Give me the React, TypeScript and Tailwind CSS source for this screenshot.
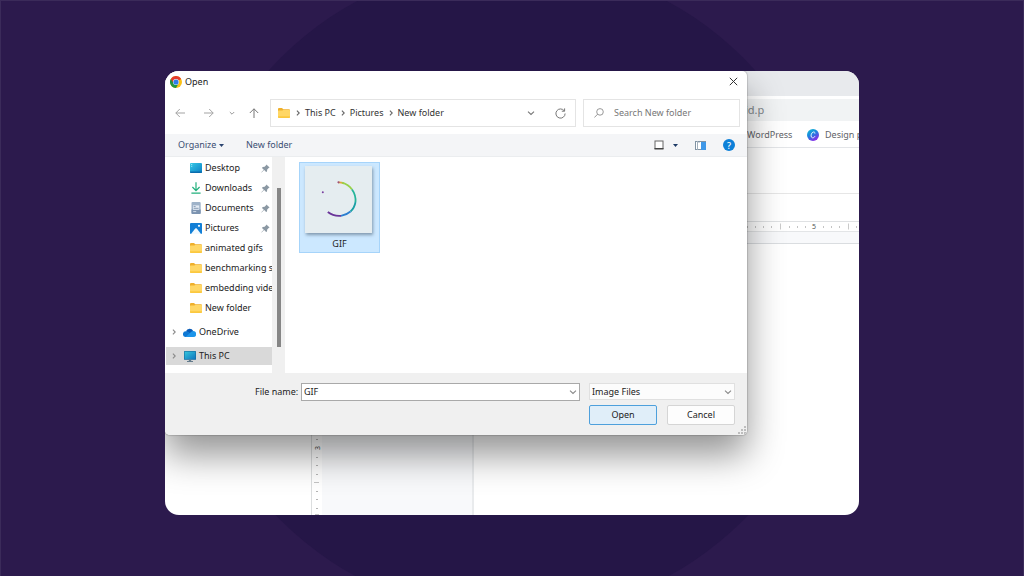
import type { ReactNode } from 'react';

function FolderIcon() {
  return (
    <svg viewBox="0 0 12 10" className="h-[10px] w-3 shrink-0" aria-hidden="true">
      <path d="M0 1Q0 0 1 0h3l1.3 1.3H11q1 0 1 1V5H0z" fill="#efb02c" />
      <path d="M0 3.2Q0 2.6.6 2.6h3.6L5.4 1.9H11.4q.6 0 .6.6V9q0 1-1 1H1Q0 10 0 9z" fill="#ffd766" />
      <path d="M0 8.2h12V9q0 1-1 1H1Q0 10 0 9z" fill="#fbc83f" />
    </svg>
  );
}

function DesktopIcon() {
  return (
    <svg viewBox="0 0 12 10" className="h-[10px] w-3 shrink-0" aria-hidden="true">
      <defs>
        <linearGradient id="desk" x1="0" y1="0" x2="1" y2="1">
          <stop offset="0" stopColor="#35c9e6" />
          <stop offset="1" stopColor="#0b7fc4" />
        </linearGradient>
      </defs>
      <rect width="12" height="10" rx="1" fill="url(#desk)" />
      <path d="M1.2 1.5h1M1.2 3.3h1" stroke="#b8f2ff" strokeWidth=".9" />
      <path d="M0 8.6h12V9q0 1-1 1H1Q0 10 0 9z" fill="#0a6cad" />
    </svg>
  );
}

function DownloadIcon() {
  return (
    <svg viewBox="0 0 12 12" className="size-3 shrink-0" fill="none" stroke="#22b07d" strokeWidth="1.2" aria-hidden="true">
      <path d="M6 .3v8M2.4 5 6 8.6 9.6 5" />
      <path d="M1.4 11.2h9.2" stroke="#22b07d" strokeWidth="1.3" />
    </svg>
  );
}

function DocumentIcon() {
  return (
    <svg viewBox="0 0 12 12" className="size-3 shrink-0" aria-hidden="true">
      <rect x="1.5" width="9.2" height="12" rx="1" fill="#9fb3c9" />
      <path d="M1.5 7.5h9.2V11q0 1-1 1H2.5q-1 0-1-1z" fill="#7c93b0" />
      <rect x="3" y="3.4" width="6.2" height="4.4" fill="#e4ecf5" />
      <path d="M3.6 4.6h2M3.6 6.3h5" stroke="#7088a5" strokeWidth=".8" />
      <path d="M3.200 9.600h3" stroke="#e4ecf5" strokeWidth=".8" />
    </svg>
  );
}

function PicturesIcon() {
  return (
    <svg viewBox="0 0 12 11" className="h-[11px] w-3 shrink-0" aria-hidden="true">
      <rect width="12" height="11" rx="1" fill="#127fd6" />
      <path d="M1 11 5.2 5.6q.8-.8 1.6 0L11 11z" fill="#f2faff" />
      <circle cx="9" cy="2.8" r="1.1" fill="#f2faff" />
    </svg>
  );
}

function CloudIcon() {
  return (
    <svg viewBox="0 0 13 9" className="h-[9px] w-[13px] shrink-0" aria-hidden="true">
      <path d="M3 3.3A3.9 3.9 0 0 1 10.2 3L8.5 7z" fill="#0a5cb8" />
      <path d="M2.7 9A2.7 2.7 0 0 1 3 3.2q1.2-.2 2.4.7L11 8z" fill="#0f78d4" />
      <path d="M2.7 9 8 4q1-.9 2.2-.9A2.9 2.9 0 0 1 10.3 9z" fill="#1d95ea" />
    </svg>
  );
}

function MonitorIcon() {
  return (
    <svg viewBox="0 0 12 11" className="h-[11px] w-3 shrink-0" aria-hidden="true">
      <defs>
        <linearGradient id="screen" x1="0" y1="0" x2="1" y2="1">
          <stop offset="0" stopColor="#35c7dc" />
          <stop offset="1" stopColor="#0f75be" />
        </linearGradient>
      </defs>
      <rect width="12" height="8.8" rx=".6" fill="#176a9d" />
      <rect x=".6" y=".6" width="10.8" height="7.6" fill="url(#screen)" />
      <path d="M4.8 8.8h2.4v1.3H9V11H3v-.9h1.8z" fill="#637b8c" />
    </svg>
  );
}

function PinIcon() {
  return (
    <svg viewBox="0 0 9 9" className="size-[9px] shrink-0" aria-hidden="true">
      <path d="M5.4.4 8.6 3.6 7.7 4 6.2 5.5 6 7.4 5.1 8 3.2 6.1.6 8.6.3 8.3 2.8 5.7 1 3.9 1.7 3l1.9-.2L5.1 1.3z" fill="#8b98a3" />
    </svg>
  );
}

function ChromeIcon() {
  return (
    <svg viewBox="0 0 48 48" className="size-3 shrink-0" aria-hidden="true">
      <circle cx="24" cy="24" r="24" fill="#fbc116" />
      <path d="M24 24 3.2 12A24 24 0 0 1 44.8 12z" fill="#e33b2e" />
      <path d="M24 24 3.2 12A24 24 0 0 0 24 48l10.4-18z" fill="#229342" />
      <path d="M3.2 12h41.6L24 13 14.5 29.5z" fill="#e33b2e" />
      <circle cx="24" cy="24" r="12" fill="#fff" />
      <circle cx="24" cy="24" r="10.4" fill="#2f7de9" />
    </svg>
  );
}

function Chevron({ dir, tone }: { dir: 'right' | 'down'; tone: string }) {
  return (
    <svg viewBox="0 0 8 8" className={`size-2 shrink-0 ${tone}`} fill="none" stroke="currentColor" strokeWidth="1.1" aria-hidden="true">
      <path d={dir === 'right' ? 'M2.900 1.700 5.200 4 2.900 6.300' : 'M1 2.700 4 5.500 7 2.700'} />
    </svg>
  );
}

function Arrow({ d, tone }: { d: string; tone: string }) {
  return (
    <svg viewBox="0 0 10 10" className={`size-[10px] ${tone}`} fill="none" stroke="currentColor" strokeWidth="1" aria-hidden="true">
      <path d={d} />
    </svg>
  );
}

const places: { name: string; icon: ReactNode; pinned?: boolean }[] = [
  { name: 'Desktop', icon: <DesktopIcon />, pinned: true },
  { name: 'Downloads', icon: <DownloadIcon />, pinned: true },
  { name: 'Documents', icon: <DocumentIcon />, pinned: true },
  { name: 'Pictures', icon: <PicturesIcon />, pinned: true },
  { name: 'animated gifs', icon: <FolderIcon /> },
  { name: 'benchmarking sc', icon: <FolderIcon /> },
  { name: 'embedding vide', icon: <FolderIcon /> },
  { name: 'New folder', icon: <FolderIcon /> },
];

function HorizontalRuler() {
  const dots = [1, 9, 17, 25, 43, 51, 59, 77, 85, 93, 110];
  return (
    <svg viewBox="0 0 112 9" className="h-[9px] w-[112px]" aria-hidden="true">
      {dots.map((x) => (
        <rect key={x} x={x - 1} y="4" width="1" height="2" fill="#c4c4c4" />
      ))}
      <path d="M33.5 1.500v6M101.500 1.500v6" stroke="#cacaca" />
      <text x="67" y="7" fontSize="7" textAnchor="middle" fill="#555">5</text>
    </svg>
  );
}

function VerticalRuler() {
  const dots = [4, 22, 30, 39, 56, 64, 73];
  return (
    <svg viewBox="0 0 9 80" className="h-20 w-[9px]" aria-hidden="true">
      {dots.map((y) => (
        <rect key={y} x="4" y={y} width="2" height="1" fill="#b5b5b5" />
      ))}
      <path d="M2 47.5h5M3 79.500h4" stroke="#c4c4c4" />
      <text transform="translate(8 13) rotate(-90)" fontSize="7" textAnchor="middle" fill="#444">3</text>
    </svg>
  );
}

function EditorPage() {
  return (
    <div className="col-start-1 row-start-1 flex min-w-0 flex-col bg-white text-[#5f6368]">
      <div className="h-[25px] bg-[#e8eaed]" />
      <div className="mt-[3px] flex h-[22px] items-center justify-end bg-[#f1f3f4]">
        <span className="w-[114px] text-[11px] text-[#80868b]">id.p</span>
      </div>
      <div className="flex h-[27px] items-center justify-end overflow-hidden border-b border-[#e3e5e8] pt-[1px]">
        <div className="flex w-[112px] shrink-0 items-center whitespace-nowrap">
          <a href="#wordpress" className="w-[60px] shrink-0">WordPress</a>
          <a href="#design" className="flex shrink-0 items-center gap-[6px]">
            <svg viewBox="0 0 12 12" className="size-3 shrink-0" aria-hidden="true">
              <defs>
                <linearGradient id="brand" x1="0" y1="0" x2=".6" y2="1">
                  <stop offset="0" stopColor="#10c4cf" />
                  <stop offset=".5" stopColor="#1b83df" />
                  <stop offset="1" stopColor="#8a2be8" />
                </linearGradient>
              </defs>
              <circle cx="6" cy="6" r="6" fill="url(#brand)" />
              <path d="M7.900 4.600C8.300 3 6.600 2.300 5.200 3.700 3.600 5.400 3.700 8.600 5.500 8.800 6.600 8.900 7.500 8.100 8 7.200" fill="none" stroke="#fff" strokeWidth=".9" />
            </svg>
            Design p
          </a>
        </div>
      </div>
      <div className="h-[46px] border-b border-[#e6e6e6]" />
      <div className="h-[28px] border-b border-[#dfe1e3]" />
      <div className="flex h-[10px] justify-end border-b border-[#e3e5e7]">
        <HorizontalRuler />
      </div>
      <div className="h-3 border-b border-[#dadde0] bg-[#f8f9fb]" />
      <div className="flex flex-1">
        <div className="w-[147px] border-r border-[#dcdedf]" />
        <div className="flex w-[10px] items-end">
          <VerticalRuler />
        </div>
        <div className="w-[152px] border-r-2 border-[#e9ebed] bg-[#f8f9fb]" />
        <div className="flex-1" />
      </div>
    </div>
  );
}

function AddressRow() {
  return (
    <div className="flex items-center pt-[7px] pr-[7px] pb-[7px] pl-[10px]">
      <div className="flex w-[95px] shrink-0 items-center text-[#9a9a9a]">
        <button aria-label="Back" className="w-[28px]"><Arrow d="M10 5H.8M4.800 1 .8 5l4 4" tone="text-[#a3a3a3]" /></button>
        <button aria-label="Forward" className="w-[26px] pl-[1px]"><Arrow d="M0 5h9.200M5.200 1l4 4-4 4" tone="text-[#a3a3a3]" /></button>
        <button aria-label="Recent locations" className="flex w-[20px]">
          <svg viewBox="0 0 6 6" className="size-[6px]" fill="none" stroke="currentColor" aria-hidden="true"><path d="M.8 2 3 4.200 5.200 2" /></svg>
        </button>
        <button aria-label="Up"><Arrow d="M5 10V.8M.8 5 5 .8 9.200 5" tone="text-[#777]" /></button>
      </div>
      <div className="flex h-[28px] flex-1 items-center border border-[#e4e4e4] pr-[9px] pl-[7px] text-[#333]">
        <FolderIcon />
        <nav aria-label="Location" className="flex flex-1 items-center pl-[4px]">
          <Chevron dir="right" tone="text-[#666]" />
          <a href="#this-pc" className="px-[3px]">This PC</a>
          <Chevron dir="right" tone="text-[#666]" />
          <a href="#pictures" className="px-[3px]">Pictures</a>
          <Chevron dir="right" tone="text-[#666]" />
          <a href="#new-folder" className="px-[3px]">New folder</a>
        </nav>
        <button aria-label="Previous locations" className="mr-[20px]"><Chevron dir="down" tone="text-[#777]" /></button>
        <button aria-label="Refresh">
          <svg viewBox="0 0 11 11" className="size-[11px]" fill="none" stroke="#777" aria-hidden="true">
            <path d="M9.200 2.800A4.600 4.600 0 1 0 10.100 5.500M9.600.4v2.800H6.800" />
          </svg>
        </button>
      </div>
      <label className="ml-[7px] flex h-[28px] w-[157px] shrink-0 items-center border border-[#e4e4e4] pl-[10px]">
        <svg viewBox="0 0 10 10" className="size-[10px] shrink-0" fill="none" stroke="#8c8c8c" strokeWidth=".9" aria-hidden="true">
          <circle cx="6" cy="3.900" r="3.300" />
          <path d="M3.600 6.200.4 9.500" />
        </svg>
        <input aria-label="Search New folder" placeholder="Search New folder" className="ml-[10px] w-full min-w-0 outline-none placeholder:text-[#777]" />
      </label>
    </div>
  );
}

function CommandBar() {
  return (
    <div className="flex h-[23px] items-center border-b border-[#ebedef] bg-[#f4f5f7] pr-3 pl-[13px] text-[#3b4f73]">
      <button className="flex w-[68px] items-center gap-[3px]">
        Organize
        <svg viewBox="0 0 5 3" className="h-[3px] w-[5px]" aria-hidden="true"><path d="M0 0h5L2.500 3z" fill="#2b4470" /></svg>
      </button>
      <button>New folder</button>
      <div className="ml-auto flex items-center">
        <button aria-label="View" className="flex items-center gap-[9px]">
          <svg viewBox="0 0 10 10" className="size-[10px]" aria-hidden="true">
            <rect x="1" y="1" width="8" height="7.500" fill="#fff" stroke="#666" />
            <path d="M.5 8.700h9" stroke="#444" strokeWidth="1.500" />
          </svg>
          <svg viewBox="0 0 5 3" className="h-[3px] w-[5px]" aria-hidden="true"><path d="M0 0h5L2.500 3z" fill="#1c3a66" /></svg>
        </button>
        <button aria-label="Preview pane" className="ml-[17px]">
          <svg viewBox="0 0 11 9" className="h-[9px] w-[11px]" aria-hidden="true">
            <rect x=".5" y=".5" width="10" height="8" fill="#fff" stroke="#8193a3" />
            <path d="M2.500 0v9M3.500 1.500h1" stroke="#a3b0bc" />
            <rect x="6" y="1" width="5" height="8" fill="#3f98e8" />
          </svg>
        </button>
        <button aria-label="Help" className="ml-[17px] flex size-3 items-center justify-center rounded-full bg-[#0d80d8] text-[9px] leading-none font-medium text-white">?</button>
      </div>
    </div>
  );
}

function NavigationPane() {
  return (
    <div className="flex w-[120px] shrink-0 overflow-hidden">
      <ul className="w-[107px] overflow-hidden pt-[1px] whitespace-nowrap text-[#222]">
        {places.map((p) => (
          <li key={p.name} className="flex h-5 items-center pr-[2px] pl-[25px]">
            {p.icon}
            <span className="ml-[3px] flex-1">{p.name}</span>
            {p.pinned && <PinIcon />}
          </li>
        ))}
        <li className="mt-[4px] flex h-5 items-center pl-[5px]">
          <Chevron dir="right" tone="text-[#8a8a8a]" />
          <span className="ml-[5px] flex items-center gap-[3px]"><CloudIcon />OneDrive</span>
        </li>
        <li className="mt-[5px] ml-[1px] flex h-[18px] items-center bg-[#d9d9d9] pl-[4px]">
          <Chevron dir="right" tone="text-[#8a8a8a]" />
          <span className="ml-[6px] flex items-center gap-[3px]"><MonitorIcon />This PC</span>
        </li>
      </ul>
      <div className="w-[13px] bg-[#f0f0f0] pt-[31px]">
        <div className="ml-[5px] h-[159px] w-[4px] bg-[#868686]" />
      </div>
    </div>
  );
}

function SpinnerPreview() {
  return (
    <svg viewBox="0 0 67 67" className="mr-[2px] size-[67px] bg-[#e5edf0] shadow-[1px_2px_3px_rgba(70,90,110,0.55)]" fill="none" strokeWidth="1.800" aria-hidden="true">
      <path d="M33.500 16.300q3 0 5.500 1" stroke="#e0a93b" />
      <path d="M37 16.700Q43.500 18.500 47 23.500" stroke="#97d14a" />
      <path d="M47 23.500Q51 29 50.500 36" stroke="#25b59a" />
      <path d="M50.500 36Q49.500 42 45.500 45.500" stroke="#1ba0a5" />
      <path d="M45.500 45.500Q41.500 49 36 49.800" stroke="#2c7fd0" />
      <path d="M36 49.800Q28.500 50.500 22.800 46" stroke="#6a3599" />
      <circle cx="33.500" cy="16.300" r="1.100" fill="#a05078" />
      <circle cx="17.800" cy="26.300" r="1" fill="#7a3fa0" />
    </svg>
  );
}

function Footer() {
  return (
    <div className="relative grid grid-cols-[1fr_146px] gap-x-[9px] gap-y-[4px] bg-[#f0f0f0] pt-[10px] pr-3 pb-[10px] pl-[90px] text-[#222]">
      <div className="flex h-[18px] items-center">
        <label htmlFor="file-name" className="w-[46px] shrink-0 whitespace-nowrap">File name:</label>
        <div className="flex h-[18px] flex-1 items-center border border-[#a9a9a9] bg-white pr-[2px] pl-[2px]">
          <input id="file-name" defaultValue="GIF" className="min-w-0 flex-1 outline-none" />
          <button aria-label="Recent file names"><Chevron dir="down" tone="text-[#888]" /></button>
        </div>
      </div>
      <div className="grid h-[17px] items-center">
        <select aria-label="File type" className="col-start-1 row-start-1 h-[17px] w-full appearance-none border border-[#e0e0e0] bg-[#fcfcfc] pl-[2px]">
          <option>Image Files</option>
        </select>
        <span className="pointer-events-none col-start-1 row-start-1 mr-[3px] justify-self-end"><Chevron dir="down" tone="text-[#888]" /></span>
      </div>
      <div className="col-start-2 flex gap-[10px]">
        <button className="h-5 flex-1 rounded-[2px] border border-[#4ea0dc] bg-[#e0eef9]">Open</button>
        <button className="h-5 flex-1 rounded-[2px] border border-[#d5d5d5] bg-[#fdfdfd]">Cancel</button>
      </div>
      <svg viewBox="0 0 8 8" className="absolute right-[1px] bottom-[1px] size-2" fill="#bdbdbd" aria-hidden="true">
        <path d="M6 0h2v2H6zM3 3h2v2H3zM6 3h2v2H6zM0 6h2v2H0zM3 6h2v2H3zM6 6h2v2H6z" />
      </svg>
    </div>
  );
}

function OpenDialog() {
  return (
    <section role="dialog" aria-label="Open" className="relative col-start-1 row-start-1 mr-[112px] flex flex-col self-start overflow-hidden rounded-[5px] bg-white shadow-[0_20px_36px_rgba(0,0,0,0.42),0_0_1px_1px_rgba(0,0,0,0.14)]">
      <header className="flex h-[21px] items-center justify-between pr-[9px] pl-[5px] text-[#222]">
        <h1 className="flex items-center gap-[3px]"><ChromeIcon />Open</h1>
        <button aria-label="Close">
          <svg viewBox="0 0 9 9" className="size-[9px]" fill="none" stroke="#333" aria-hidden="true"><path d="m.8.8 7.400 7.400M8.200.8.8 8.200" /></svg>
        </button>
      </header>
      <AddressRow />
      <CommandBar />
      <div className="flex h-[216px]">
        <NavigationPane />
        <div className="flex-1 pt-[5px] pl-[14px]">
          <button className="flex h-[91px] w-[81px] flex-col items-center border border-[#a6d4fa] bg-[#cce8ff] pt-[3px] text-[#222]">
            <SpinnerPreview />
            <span className="mt-[5px]">GIF</span>
          </button>
        </div>
      </div>
      <Footer />
    </section>
  );
}

export default function App() {
  return (
    <main className="relative isolate min-h-screen overflow-hidden border border-b-0 border-[#3b2b5a] bg-[#2c1a4d] px-[164px] pt-[70px] pb-[60px] font-['Noto_Sans',sans-serif] text-[9px] leading-3">
      <div className="absolute top-1/2 left-1/2 -z-10 size-[654px] -translate-x-1/2 -translate-y-1/2 rounded-full bg-[#251647]" />
      <div className="grid min-h-[444px] overflow-hidden rounded-[14px] bg-white">
        <EditorPage />
        <OpenDialog />
      </div>
    </main>
  );
}
